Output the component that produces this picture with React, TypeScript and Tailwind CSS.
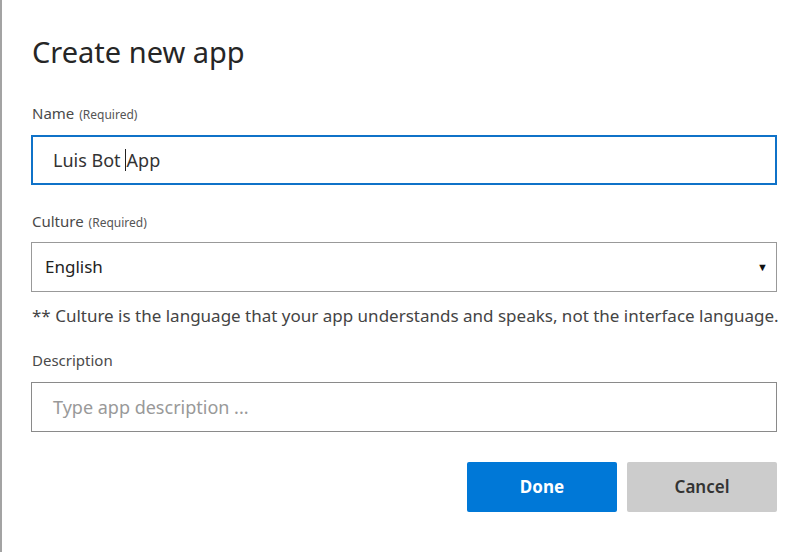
export default function App() {
  const font = { fontFamily: '"Noto Sans", "Open Sans", sans-serif' };
  return (
    <div
      className="w-[807px] h-[552px] bg-white border-l-2 border-[#a3a3a3] pl-[29px] pr-[30px] pt-[34px] text-[#333333] overflow-hidden"
      style={font}
    >
      <h1 className="text-[29px] leading-[36px] text-[#262626] pl-px">Create new app</h1>

      {/* Name */}
      <div className="mt-[34px] h-[18px] pl-px text-[15px] leading-[18px] text-[#4a4a4a]">
        Name <span className="ml-px text-[12px] text-[#555555]">(Required)</span>
      </div>
      <div className="mt-[13px] h-[50px] border-2 border-[#0f72c8] flex items-center pl-[20px] text-[18px] text-[#333333]">
        <span>Luis Bot</span>
        <span className="w-px h-[22px] bg-[#222222] ml-[4px] mr-px" />
        <span>App</span>
      </div>

      {/* Culture */}
      <div className="mt-[27px] h-[18px] pl-px text-[15px] leading-[18px] text-[#4a4a4a]">
        Culture <span className="ml-px text-[12px] text-[#555555]">(Required)</span>
      </div>
      <div className="mt-[12px] h-[50px] border border-[#999999] flex items-center justify-between pl-[13px] pr-[8px] text-[17px] text-[#222222]">
        <span>English</span>
        <span className="text-[11px] text-[#111111]">▼</span>
      </div>
      <p className="mt-[12px] pl-px text-[17px] leading-[24px] text-[#444444] whitespace-nowrap">
        ** Culture is the language that your app understands and speaks, not the interface language.
      </p>

      {/* Description */}
      <div className="mt-[23px] h-[18px] pl-px text-[15px] leading-[18px] text-[#4a4a4a]">Description</div>
      <div className="mt-[13px] h-[50px] border border-[#8a8a8a] flex items-center pl-[21px] text-[18px] text-[#999999]">
        Type app description ...
      </div>

      {/* Buttons */}
      <div className="mt-[30px] flex justify-end gap-[10px]">
        <button className="w-[150px] h-[50px] rounded-[2px] bg-[#0078d7] text-white text-[17px] font-bold">
          Done
        </button>
        <button className="w-[150px] h-[50px] rounded-[2px] bg-[#cccccc] text-[#333333] text-[17px] font-semibold">
          Cancel
        </button>
      </div>
    </div>
  );
}
